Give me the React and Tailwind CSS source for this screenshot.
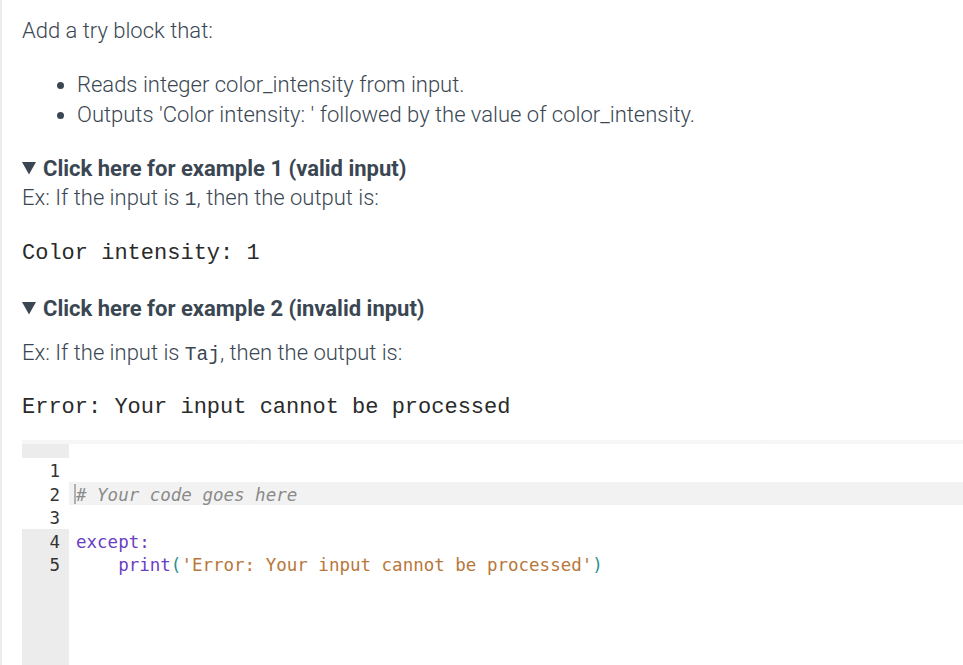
import React from 'react';

const prose = "font-['Roboto',sans-serif] font-light text-[22px] leading-[30px] text-[#3a4753]";
const mono = "font-['Liberation_Mono','Courier_New',monospace]";
const editorFont = "font-['DejaVu_Sans_Mono',monospace] text-[17.5px]";

const Caret = () => (
  <svg width="14" height="13" viewBox="0 0 14 13" className="shrink-0">
    <path d="M0 0 L14 0 L7 12.5 Z" fill="#3a4753" />
  </svg>
);

const Example = ({ title, className, children }) => (
  <div className={className}>
    <div className="flex items-center gap-[7px] h-[30px]">
      <Caret />
      <span className="font-['Roboto',sans-serif] font-bold text-[22px] text-[#3a4753]">{title}</span>
    </div>
    {children}
  </div>
);

const codeLines = [
  { n: 1, content: null, editable: true },
  {
    n: 2,
    editable: true,
    active: true,
    content: <span className="italic text-[#8a8a8a]"># Your code goes here</span>,
  },
  { n: 3, content: null, editable: true },
  { n: 4, content: <span className="text-[#6a3fc4]">except:</span> },
  {
    n: 5,
    content: (
      <>
        <span>{'    '}</span>
        <span className="text-[#6a3fc4]">print</span>
        <span className="text-[#2a9090]">(</span>
        <span className="text-[#b8773a]">'Error: Your input cannot be processed'</span>
        <span className="text-[#2a9090]">)</span>
      </>
    ),
  },
];

export default function App() {
  return (
    <div className="min-h-[665px] bg-white border-l-2 border-[#ececec] overflow-hidden">
      <div className="pl-[20px]">
        <p className={`${prose} pt-[16px]`}>Add a try block that:</p>

        <ul className={`${prose} list-disc pl-[55px] mt-[24px]`}>
          <li>Reads integer color_intensity from input.</li>
          <li>Outputs 'Color intensity: ' followed by the value of color_intensity.</li>
        </ul>

        <Example title="Click here for example 1 (valid input)" className="mt-[23px]">
          <p className={prose}>
            Ex: If the input is <span className={`${mono} text-[19.5px] font-normal`}>1</span>, then the output is:
          </p>
          <pre className={`${mono} text-[22px] leading-[30px] text-[#2a2a2a] mt-[24px]`}>Color intensity: 1</pre>
        </Example>

        <Example title="Click here for example 2 (invalid input)" className="mt-[24px]">
          <p className={`${prose} mt-[15px]`}>
            Ex: If the input is <span className={`${mono} text-[19.5px] font-normal`}>Taj</span>, then the output is:
          </p>
          <pre className={`${mono} text-[22px] leading-[30px] text-[#2a2a2a] mt-[23px]`}>
            Error: Your input cannot be processed
          </pre>
        </Example>

        <div className="mt-[17px] pt-[4px] bg-gradient-to-b from-[#f6f6f6] to-white">
          <div className={`flex ${editorFont} h-[240px]`}>
            <div className="w-[47px] shrink-0 bg-[#ececec] flex flex-col">
              <div className="h-[14px] shrink-0" />
              {codeLines.map((l) => (
                <div
                  key={l.n}
                  className={`h-[23.5px] shrink-0 leading-[27px] text-right pr-[9px] text-[#333] ${l.editable ? 'bg-white' : ''}`}
                >
                  {l.n}
                </div>
              ))}
            </div>
            <div className="flex-1 flex flex-col bg-white">
              <div className="h-[14px] shrink-0" />
              {codeLines.map((l) => (
                <div
                  key={l.n}
                  className={`h-[23.5px] shrink-0 leading-[27px] whitespace-pre pl-[7px] text-[#333] relative ${l.active ? 'bg-[#f2f2f2]' : ''}`}
                >
                  {l.active && <span className="absolute left-[5px] top-[2px] w-[2px] h-[20px] bg-[#b0b0b0]" />}
                  {l.content}
                </div>
              ))}
            </div>
          </div>
        </div>
      </div>
    </div>
  );
}
